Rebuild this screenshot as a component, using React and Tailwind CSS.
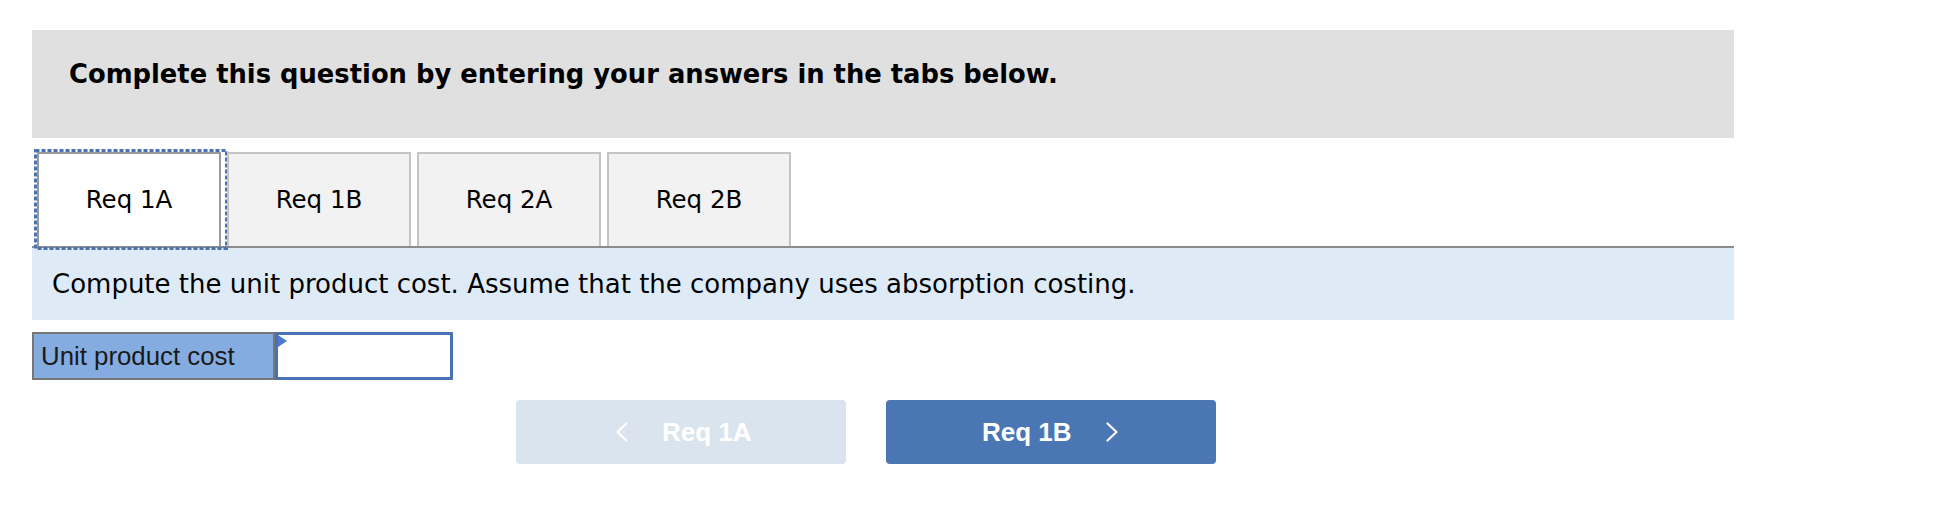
import React from "react";

function Chevron({ dir }) {
  return (
    <svg width="12" height="20" viewBox="0 0 12 20" fill="none" stroke="white" strokeWidth="2.2" strokeLinecap="round" strokeLinejoin="round">
      {dir === "left" ? <polyline points="10.5,1.5 1.5,10 10.5,18.5" /> : <polyline points="1.5,1.5 10.5,10 1.5,18.5" />}
    </svg>
  );
}

export default function App() {
  const tabs = ["Req 1A", "Req 1B", "Req 2A", "Req 2B"];
  return (
    <div className="w-[1954px] h-[530px] bg-white" style={{ fontFamily: '"DejaVu Sans", Verdana, sans-serif' }}>
      <div className="ml-[32px] pt-[30px] w-[1702px]">
        <div className="h-[108px] bg-[#e0e0e0] pl-[37px] pt-[29px]">
          <h2 className="text-[25.8px] leading-[30px] font-bold text-black">Complete this question by entering your answers in the tabs below.</h2>
        </div>
        <div className="mt-[14px] flex items-end gap-[6px] border-b-[2px] border-[#8c8c8c] pl-[5px]">
          {tabs.map((t, i) => (
            <div
              key={t}
              className={
                "relative w-[184px] h-[94px] flex items-center justify-center border-[2px] border-b-0 text-[24.5px] text-black " +
                (i === 0 ? "bg-white border-[#999999]" : "bg-[#f2f2f2] border-[#c4c4c4]")
              }
            >
              {t}
              {i === 0 && (
                <svg className="absolute left-[-5px] top-[-5px] pointer-events-none" width="194" height="101" viewBox="0 0 194 101">
                  <rect x="1.5" y="1.5" width="191" height="98" fill="none" stroke="#4a72b0" strokeWidth="3" strokeDasharray="4 2" />
                </svg>
              )}
            </div>
          ))}
        </div>
        <div className="h-[72px] bg-[#deebf7] flex items-center pl-[20px] text-[26px] text-black">
          Compute the unit product cost. Assume that the company uses absorption costing.
        </div>
        <div className="mt-[12px] flex h-[48px]" style={{ fontFamily: '"Liberation Sans", Arial, sans-serif' }}>
          <div className="w-[243px] h-full bg-[#84ace0] border-[2px] border-[#777777] flex items-center pl-[7px] text-[25.8px] text-[#1a1a1a]">
            Unit product cost
          </div>
          <div className="relative w-[178px] h-full bg-white border-[3px] border-[#4a72b0]">
            <div className="absolute left-0 top-0 w-0 h-0 border-t-[6px] border-b-[6px] border-l-[9px] border-t-transparent border-b-transparent border-l-[#4a7bd0]" />
          </div>
        </div>
        <div className="mt-[20px] ml-[484px] flex gap-[40px]" style={{ fontFamily: '"Liberation Sans", Arial, sans-serif' }}>
          <button className="w-[330px] h-[64px] rounded-[4px] bg-[#d9e4ef] flex items-center justify-start gap-[34px] text-white text-[26px] font-bold pl-[100px]">
            <Chevron dir="left" />
            <span>Req 1A</span>
          </button>
          <button className="w-[330px] h-[64px] rounded-[4px] bg-[#4a76b4] flex items-center justify-start gap-[34px] text-white text-[26px] font-bold pl-[96px]">
            <span>Req 1B</span>
            <Chevron dir="right" />
          </button>
        </div>
      </div>
    </div>
  );
}
